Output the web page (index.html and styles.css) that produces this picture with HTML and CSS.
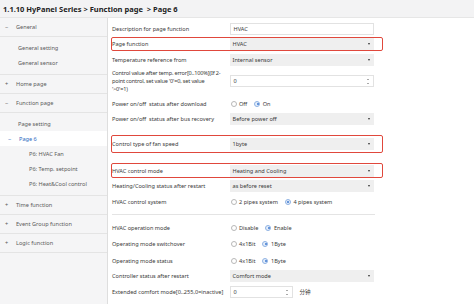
FILE: index.html
```html
<!DOCTYPE html>
<html>
<head>
<meta charset="utf-8">
<link rel="stylesheet" href="styles.css">
</head>
<body>
<div class="app">
  <header class="topbar">1.1.10 HyPanel Series &gt; Function page &nbsp;&gt; Page 6</header>
  <div class="main">
    <nav class="side">
      <div class="top"><span class="sign">−</span>General</div>
      <div class="sub">
        <div class="item">General setting</div>
        <div class="item">General sensor</div>
      </div>
      <div class="top"><span class="sign">+</span>Home page</div>
      <div class="top"><span class="sign">−</span>Function page</div>
      <div class="sub">
        <div class="item">Page setting</div>
        <div class="item active"><span class="sign">−</span>Page 6</div>
        <div class="item deep">P6: HVAC Fan</div>
        <div class="item deep">P6: Temp. setpoint</div>
        <div class="item deep">P6: Heat&amp;Cool control</div>
      </div>
      <div class="top"><span class="sign">+</span>Time function</div>
      <div class="top"><span class="sign">+</span>Event Group function</div>
      <div class="top"><span class="sign">+</span>Logic function</div>
    </nav>
    <section class="content">
      <div class="row">
        <div class="label">Description for page function</div>
        <div class="input">HVAC</div>
      </div>
      <div class="row marked m1">
        <div class="label">Page function</div>
        <div class="select">HVAC</div>
      </div>
      <div class="row m2">
        <div class="label">Temperature reference from</div>
        <div class="select">Internal sensor</div>
      </div>
      <div class="row tall m1">
        <div class="label tight">Control value after temp. error[0..100%](If 2-point control, set value '0'=0, set value<br>'&gt;0'=1)</div>
        <div class="input spin">0</div>
      </div>
      <div class="row m3">
        <div class="label">Power on/off &nbsp;status after download</div>
        <div class="radios">
          <span class="radio"></span><span class="opt">Off</span>
          <span class="radio on"></span><span class="opt">On</span>
        </div>
      </div>
      <div class="row m1">
        <div class="label">Power on/off &nbsp;status after bus recovery</div>
        <div class="select">Before power off</div>
      </div>
      <div class="row marked big m9">
        <div class="label">Control type of fan speed</div>
        <div class="select">1byte</div>
      </div>
      <div class="row marked mid m10">
        <div class="label">HVAC control mode</div>
        <div class="select">Heating and Cooling</div>
      </div>
      <div class="row m1">
        <div class="label">Heating/Cooling status after restart</div>
        <div class="select">as before reset</div>
      </div>
      <div class="row m2">
        <div class="label">HVAC control system</div>
        <div class="radios">
          <span class="radio"></span><span class="opt">2 pipes system</span>
          <span class="radio on"></span><span class="opt">4 pipes system</span>
        </div>
      </div>
      <div class="sep"></div>
      <div class="row m6">
        <div class="label">HVAC operation mode</div>
        <div class="radios">
          <span class="radio"></span><span class="opt">Disable</span>
          <span class="radio on"></span><span class="opt">Enable</span>
        </div>
      </div>
      <div class="row m2">
        <div class="label">Operating mode switchover</div>
        <div class="radios">
          <span class="radio"></span><span class="opt">4x1Bit</span>
          <span class="radio on"></span><span class="opt">1Byte</span>
        </div>
      </div>
      <div class="row m3">
        <div class="label">Operating mode status</div>
        <div class="radios">
          <span class="radio"></span><span class="opt">4x1Bit</span>
          <span class="radio on"></span><span class="opt">1Byte</span>
        </div>
      </div>
      <div class="row m1">
        <div class="label">Controller status after restart</div>
        <div class="select">Comfort mode</div>
      </div>
      <div class="row m2">
        <div class="label">Extended comfort mode[0..255,0=inactive]</div>
        <div class="unit-wrap">
          <div class="input spin short">0</div>
          <span class="unit">分钟</span>
        </div>
      </div>
    </section>
  </div>
</div>
</body>
</html>
```

FILE: styles.css
```css
* { box-sizing: border-box; }
html, body { margin: 0; padding: 0; }
body {
  width: 474px;
  height: 304px;
  overflow: hidden;
  background: #fff;
  font-family: "Noto Sans", "Noto Sans CJK SC", sans-serif;
  font-size: 5.6px;
  color: #3a3a3a;
}
.app { display: flex; flex-direction: column; height: 304px; }
.topbar {
  height: 18px;
  flex: none;
  background: #f3f3f4;
  border-bottom: 1px solid #e6e6e6;
  padding-left: 3px;
  display: flex;
  align-items: center;
  font-size: 7.5px;
  font-weight: bold;
  color: #222;
}
.main { display: flex; flex: 1; min-height: 0; }
.side {
  width: 108px;
  flex: none;
  background: #f5f5f6;
  border-right: 1px solid #dedede;
  color: #5a5a5a;
}
.top {
  height: 19px;
  border-bottom: 1px solid #e4e4e4;
  display: flex;
  align-items: center;
  padding-left: 5px;
}
.sign { width: 11px; display: inline-block; }
.sub { padding: 3px 0 4px; border-bottom: 1px solid #e4e4e4; }
.sub .item {
  height: 15px;
  display: flex;
  align-items: center;
  padding-left: 18px;
}
.sub .item.deep { padding-left: 29px; }
.sub .item.active {
  background: #fff;
  color: #2b66c0;
  padding-left: 8px;
}
.content {
  flex: 1;
  padding: 4px 0 0 3px;
  display: flex;
  flex-direction: column;
}
.row {
  width: 272px;
  height: 14px;
  flex: none;
  border: 1.5px solid transparent;
  border-radius: 2px;
  display: grid;
  grid-template-columns: 117.5px 144px;
  align-items: center;
}
.row.marked { border-color: #e0483c; }
.row.tall { height: 26px; }
.row.big { height: 18px; }
.row.mid { height: 15px; }
.m1 { margin-top: 1px; }
.m2 { margin-top: 2px; }
.m3 { margin-top: 3px; }
.m6 { margin-top: 6px; }
.m9 { margin-top: 9px; }
.m10 { margin-top: 10px; }
.label { line-height: 8px; padding-right: 1px; }
.label.tight { letter-spacing: -0.18px; }
.input, .select {
  height: 12px;
  display: flex;
  align-items: center;
  padding-left: 3px;
  position: relative;
}
.input { background: #fff; border: 1px solid #e2e2e2; }
.select { background: #efefef; }
.select::after {
  content: "";
  position: absolute;
  right: 4px;
  top: 5px;
  border-left: 1.5px solid transparent;
  border-right: 1.5px solid transparent;
  border-top: 2px solid #333;
}
.spin::before, .spin::after {
  content: "";
  position: absolute;
  right: 4px;
  border-left: 1.2px solid transparent;
  border-right: 1.2px solid transparent;
}
.spin::before { top: 3px; border-bottom: 1.5px solid #555; }
.spin::after { top: 6.5px; border-top: 1.5px solid #555; }
.radios { display: flex; align-items: center; padding-left: 1px; }
.radio {
  width: 6px;
  height: 6px;
  border-radius: 50%;
  border: 0.7px solid #b8b8b8;
  background: #fff;
  margin-right: 2.5px;
  position: relative;
}
.radio.on { border-color: #8fb2e3; background: #e3edfa; }
.radio.on::after {
  content: "";
  position: absolute;
  left: 1.3px;
  top: 1.3px;
  width: 2.2px;
  height: 2.2px;
  border-radius: 50%;
  background: #3f7ad0;
}
.opt { margin-right: 7px; }
.sep {
  width: 263px;
  margin: 5px 0 0 1px;
  height: 1px;
  flex: none;
  background: #e4e4e4;
}
.unit-wrap { display: flex; align-items: center; }
.input.short { width: 63px; }
.unit { margin-left: 7px; font-family: "Noto Sans CJK SC", sans-serif; }
```
